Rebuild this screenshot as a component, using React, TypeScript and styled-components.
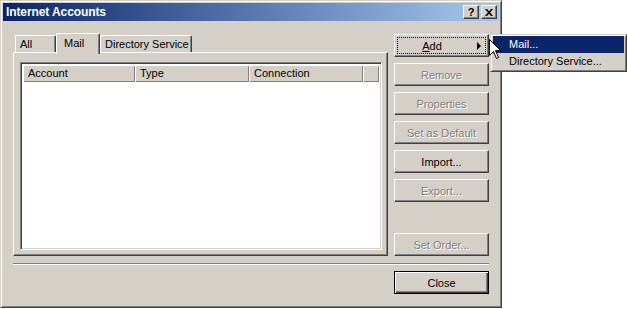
import React from "react";
import styled, { createGlobalStyle, css } from "styled-components";

const Global = createGlobalStyle`
  html, body { margin: 0; padding: 0; background: #ffffff; }
  body { font-family: "Liberation Sans", Arial, sans-serif; font-size: 11px; color: #000; }
  * { box-sizing: border-box; }
`;

const Page = styled.div`
  position: relative;
  width: 627px;
  height: 309px;
  background: #ffffff;
  overflow: hidden;
`;

const Window = styled.div`
  width: 502px;
  height: 308px;
  background: #d4d0c8;
  border-style: solid;
  border-width: 1px;
  border-color: #d4d0c8 #404040 #404040 #d4d0c8;
  box-shadow: inset 1px 1px #ffffff, inset -1px -1px #808080;
  padding: 2px;
  display: flex;
  flex-direction: column;
`;

const TitleBar = styled.div`
  height: 18px;
  background: linear-gradient(to right, #0a246a, #a6caf0);
  display: flex;
  align-items: center;
  padding: 0 2px 0 2px;
`;

const TitleText = styled.div`
  flex: 1;
  color: #ffffff;
  font-weight: bold;
  font-size: 12px;
  letter-spacing: -0.1px;
  padding-left: 1px;
`;

const TitleButton = styled.div<{ $gap?: number }>`
  width: 16px;
  height: 14px;
  margin-left: ${(p) => p.$gap ?? 0}px;
  background: #d4d0c8;
  border-style: solid;
  border-width: 1px;
  border-color: #ffffff #404040 #404040 #ffffff;
  box-shadow: inset -1px -1px #808080;
  display: flex;
  align-items: center;
  justify-content: center;
  font-weight: bold;
  font-size: 11px;
  line-height: 1;
  color: #000;
`;

const Body = styled.div`
  flex: 1;
  padding: 12px 10px 0 10px;
  display: flex;
  flex-direction: column;
`;

const MainRow = styled.div`
  display: flex;
  gap: 6px;
  height: 223px;
`;

const LeftCol = styled.div`
  width: 375px;
  display: flex;
  flex-direction: column;
`;

const TabRow = styled.div`
  height: 19px;
  display: flex;
  align-items: flex-end;
  padding-left: 2px;
  position: relative;
  z-index: 1;
`;

const Tab = styled.div<{ $w: number; $sel?: boolean; $pl?: number }>`
  width: ${(p) => p.$w}px;
  height: ${(p) => (p.$sel ? 21 : 17)}px;
  margin-bottom: ${(p) => (p.$sel ? -2 : 0)}px;
  padding-left: ${(p) => p.$pl ?? 6}px;
  padding-top: ${(p) => (p.$sel ? 3 : 2)}px;
  background: #d4d0c8;
  border-top: 1px solid #ffffff;
  border-left: 1px solid #ffffff;
  border-right: 1px solid #404040;
  border-top-left-radius: 2px;
  border-top-right-radius: 2px;
  box-shadow: inset -1px 0 #808080;
  white-space: nowrap;
  line-height: 13px;
`;

const Panel = styled.div`
  height: 204px;
  background: #d4d0c8;
  border-style: solid;
  border-width: 1px;
  border-color: #ffffff #404040 #404040 #ffffff;
  box-shadow: inset -1px -1px #808080;
  padding: 9px 5px 5px 6px;
`;

const ListView = styled.div`
  height: 188px;
  background: #ffffff;
  border-style: solid;
  border-width: 1px;
  border-color: #808080 #ffffff #ffffff #808080;
  box-shadow: inset 1px 1px #404040, inset -1px -1px #d4d0c8;
  padding: 2px;
  display: flex;
  flex-direction: column;
`;

const Header = styled.div`
  display: flex;
  height: 17px;
  background: #d4d0c8;
`;

const HeaderCell = styled.div<{ $w?: number }>`
  ${(p) => (p.$w ? css`width: ${p.$w}px;` : css`flex: 1;`)}
  height: 17px;
  padding-left: 5px;
  line-height: 17px;
  box-shadow: inset 1px 1px #ffffff, inset -1px -1px #808080;
  white-space: nowrap;
  overflow: hidden;
`;

const RightCol = styled.div`
  width: 95px;
  padding-top: 1px;
  display: flex;
  flex-direction: column;
  gap: 6px;
`;

const buttonBevel = css`
  border-style: solid;
  border-width: 1px;
  border-color: #ffffff #404040 #404040 #ffffff;
  box-shadow: inset -1px -1px #808080;
`;

const Button = styled.div<{ $disabled?: boolean; $push?: boolean; $focus?: boolean }>`
  position: relative;
  width: 95px;
  height: 23px;
  flex: none;
  background: #d4d0c8;
  ${buttonBevel}
  display: flex;
  align-items: center;
  justify-content: center;
  white-space: nowrap;
  margin-top: ${(p) => (p.$push ? "auto" : "0")};
  color: ${(p) => (p.$disabled ? "#808080" : "#000")};
  text-shadow: ${(p) => (p.$disabled ? "1px 1px #ffffff" : "none")};
  ${(p) =>
    p.$focus &&
    css`
      &::after {
        content: "";
        position: absolute;
        inset: 2px;
        border: 1px dotted #000;
      }
    `}
`;

const ButtonLabel = styled.span`
  flex: 1;
  text-align: center;
  padding-right: 8px;
`;

const Underlined = styled.span`
  text-decoration: underline;
`;

const MenuArrow = styled.span`
  width: 0;
  height: 0;
  border-top: 4px solid transparent;
  border-bottom: 4px solid transparent;
  border-left: 4px solid #000;
  margin-right: 7px;
`;

const Separator = styled.div`
  margin-top: 7px;
  height: 2px;
  border-top: 1px solid #808080;
  border-bottom: 1px solid #ffffff;
`;

const BottomRow = styled.div`
  display: flex;
  justify-content: flex-end;
  margin-top: 6px;
`;

const DefaultButton = styled.div`
  width: 95px;
  height: 23px;
  background: #d4d0c8;
  border: 1px solid #000;
  box-shadow: inset 1px 1px #ffffff, inset -1px -1px #404040, inset -2px -2px #808080;
  display: flex;
  align-items: center;
  justify-content: center;
`;

const Menu = styled.div`
  position: absolute;
  left: 490px;
  top: 34px;
  width: 137px;
  background: #d4d0c8;
  border-style: solid;
  border-width: 1px;
  border-color: #d4d0c8 #404040 #404040 #d4d0c8;
  box-shadow: inset 1px 1px #ffffff, inset -1px -1px #808080;
  padding: 1px 2px 1px 2px;
`;

const MenuItem = styled.div<{ $active?: boolean }>`
  height: 17px;
  line-height: 17px;
  padding-left: 16px;
  white-space: nowrap;
  background: ${(p) => (p.$active ? "#0a246a" : "transparent")};
  color: ${(p) => (p.$active ? "#ffffff" : "#000")};
`;

const Cursor = styled.svg`
  position: absolute;
  left: 489px;
  top: 39px;
`;

export default function App() {
  return (
    <Page>
      <Global />
      <Window>
        <TitleBar>
          <TitleText>Internet Accounts</TitleText>
          <TitleButton>?</TitleButton>
          <TitleButton $gap={2}>
            <svg width="8" height="7" viewBox="0 0 8 7">
              <path d="M0 0h2l2 2.2L6 0h2L5 3.5 8 7H6L4 4.8 2 7H0l3-3.5z" fill="#000" />
            </svg>
          </TitleButton>
        </TitleBar>
        <Body>
          <MainRow>
            <LeftCol>
              <TabRow>
                <Tab $w={41} $pl={4}>All</Tab>
                <Tab $w={44} $sel $pl={7}>Mail</Tab>
                <Tab $w={92} $pl={4}>Directory Service</Tab>
              </TabRow>
              <Panel>
                <ListView>
                  <Header>
                    <HeaderCell $w={112}>Account</HeaderCell>
                    <HeaderCell $w={114}>Type</HeaderCell>
                    <HeaderCell $w={114}>Connection</HeaderCell>
                    <HeaderCell />
                  </Header>
                </ListView>
              </Panel>
            </LeftCol>
            <RightCol>
              <Button $focus>
                <ButtonLabel>
                  <Underlined>A</Underlined>dd
                </ButtonLabel>
                <MenuArrow />
              </Button>
              <Button $disabled>Remove</Button>
              <Button $disabled>Properties</Button>
              <Button $disabled>Set as Default</Button>
              <Button>Import...</Button>
              <Button $disabled>Export...</Button>
              <Button $disabled $push>Set Order...</Button>
            </RightCol>
          </MainRow>
          <Separator />
          <BottomRow>
            <DefaultButton>Close</DefaultButton>
          </BottomRow>
        </Body>
      </Window>
      <Menu>
        <MenuItem $active>Mail...</MenuItem>
        <MenuItem>Directory Service...</MenuItem>
      </Menu>
      <Cursor width="13" height="21" viewBox="0 0 13 21">
        <path
          d="M0.5 0.5 L0.5 16.5 L4.5 12.5 L7.5 19.5 L9.5 18.5 L6.5 11.5 L11.5 11.5 Z"
          fill="#ffffff"
          stroke="#000000"
          strokeWidth="1"
          strokeLinejoin="miter"
        />
      </Cursor>
    </Page>
  );
}
